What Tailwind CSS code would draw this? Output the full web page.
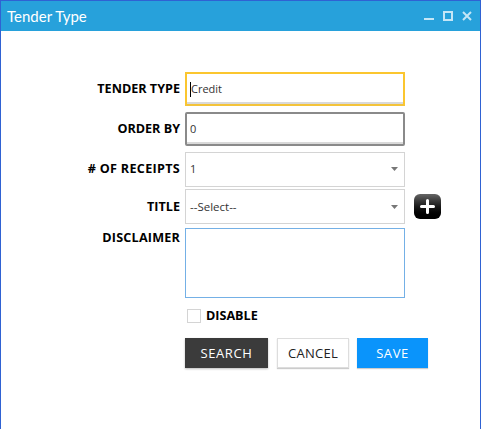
<!DOCTYPE html>
<html lang="en">
<head>
    <meta charset="UTF-8">
    <title>Tender Type</title>
    <script src="https://cdn.jsdelivr.net/npm/@tailwindcss/browser@4"></script>
</head>
<body class="bg-white">
    <div class="w-[481px] h-[429px] overflow-hidden bg-white border-x border-t border-[#2f62d3] font-['Open_Sans','Noto_Sans',sans-serif]">
        <!-- title bar -->
        <header class="h-[30px] bg-[#27a1db] flex items-center justify-between pl-[6px] pr-[8px] text-white">
            <h1 class="font-['Lato',sans-serif] text-[15px] leading-none font-normal">Tender Type</h1>
            <div class="flex items-center gap-[9px] text-[#c5e6f6]">
                <svg class="w-[10px] h-[10px]" viewBox="0 0 10 10"><rect x="0" y="7" width="10" height="2" fill="currentColor"/></svg>
                <svg class="w-[10px] h-[10px]" viewBox="0 0 10 10"><rect x="1" y="1" width="8" height="8" fill="none" stroke="currentColor" stroke-width="2"/></svg>
                <svg class="w-[10px] h-[10px]" viewBox="0 0 10 10"><path d="M1 1l8 8M9 1l-8 8" stroke="currentColor" stroke-width="2" fill="none"/></svg>
            </div>
        </header>

        <!-- form -->
        <main class="pt-[41px] w-[460px]">
            <div class="flex items-center h-[34px] mb-[6px]">
                <label class="w-[180px] pr-[1px] pt-[1px] text-right text-[12.6px] font-bold text-black">TENDER TYPE</label>
                <div class="ml-[4px] w-[220px] h-[34px] border-2 border-[#fbc62f] border-b-[#f3c33a] shadow-[inset_0_-2px_0_#d9d9d9] flex items-center pl-[3px] text-[11px] text-[#333]">
                    <span class="w-px h-[15px] bg-black"></span><span>Credit</span>
                </div>
            </div>
            <div class="flex items-center h-[34px] mb-[6px]">
                <label class="w-[180px] pr-[1px] pt-[1px] text-right text-[12.6px] font-bold text-black">ORDER BY</label>
                <div class="ml-[4px] w-[220px] h-[34px] border-2 border-[#8a8a8a] rounded-[2px] shadow-[inset_0_-2px_0_#d9d9d9] flex items-center pl-[3px] text-[11px] text-[#333]">0</div>
            </div>
            <div class="flex items-center h-[34px] mb-[3px]">
                <label class="w-[180px] pr-[1px] pt-[1px] text-right text-[12.6px] font-bold tracking-[0.3px] text-black">#&nbsp;OF RECEIPTS</label>
                <div class="ml-[4px] w-[220px] h-[35px] border border-[#d4d4d4] flex items-center justify-between pl-[4px] pr-[6px] text-[11px] text-[#333]">
                    <span>1</span>
                    <svg class="w-[7px] h-[4px]" viewBox="0 0 7 4"><path d="M0 0h7L3.5 4z" fill="#777"/></svg>
                </div>
            </div>
            <div class="flex items-center h-[35px] mb-[4px]">
                <label class="w-[180px] pr-[1px] pt-[1px] text-right text-[12.6px] font-bold text-black">TITLE</label>
                <div class="ml-[4px] w-[220px] h-[35px] border border-[#d4d4d4] flex items-center justify-between pl-[4px] pr-[6px] text-[11.5px] text-[#333]">
                    <span>--Select--</span>
                    <svg class="w-[7px] h-[4px]" viewBox="0 0 7 4"><path d="M0 0h7L3.5 4z" fill="#777"/></svg>
                </div>
                <button class="ml-[9px] w-[27px] h-[25px] shrink-0 rounded-[6px] bg-gradient-to-b from-[#666] via-[#1a1a1a] to-black flex items-center justify-center">
                    <svg class="w-[15px] h-[15px]" viewBox="0 0 15 15"><path d="M7.5 1.5v12M1.5 7.5h12" stroke="#fff" stroke-width="3" stroke-linecap="round"/></svg>
                </button>
            </div>
            <div class="flex items-start h-[70px] mb-[11px]">
                <label class="w-[180px] pr-[1px] pt-[1px] text-right text-[12.6px] font-bold tracking-[0.2px] text-black">DISCLAIMER</label>
                <div class="ml-[4px] w-[220px] h-[70px] border border-[#74b0e6]"></div>
            </div>
            <div class="flex items-center h-[14px] ml-[186px] gap-[5px] mb-[15px]">
                <span class="w-[14px] h-[14px] border border-[#d4d4d4]"></span>
                <span class="text-[12.6px] font-bold text-black">DISABLE</span>
            </div>
            <div class="flex ml-[184px] text-[13px]">
                <button class="w-[83px] h-[30px] pt-[1px] bg-[#3b3b3b] text-white tracking-[0.6px] shadow-[0_1px_2px_#bbb]">SEARCH</button>
                <button class="ml-[9px] w-[72px] h-[30px] pt-[1px] bg-white border border-[#ddd] text-[#222] tracking-[0.3px] shadow-[0_1px_1px_#ccc]">CANCEL</button>
                <button class="ml-[8px] w-[71px] h-[30px] pt-[1px] bg-[#0a94fb] text-white tracking-[0.6px] shadow-[0_1px_1px_#ccc]">SAVE</button>
            </div>
        </main>
    </div>
</body>
</html>
